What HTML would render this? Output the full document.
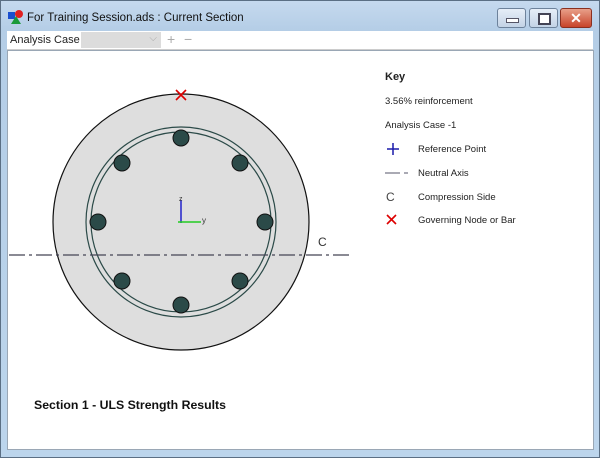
<!DOCTYPE html>
<html><head><meta charset="utf-8"><style>
body{margin:0;width:600px;height:458px;overflow:hidden;font-family:"Liberation Sans",Arial,sans-serif;}
.win{position:absolute;left:0;top:0;width:598px;height:456px;border:1px solid #5b6f84;background:linear-gradient(#c5d9ee,#b4cde6 30px,#bcd5ec);}
.title{position:absolute;left:26px;top:11px;font-size:11.5px;color:#111;}
.btn{position:absolute;top:7px;height:18px;border:1px solid #6d829b;border-radius:3px;background:linear-gradient(#e6eef8,#c3d3e6);}
.tb{position:absolute;left:6px;top:30px;width:586px;height:18px;background:#fff;border-bottom:1px solid #ccc;font-size:11px;}
.content{position:absolute;left:7px;top:50px;width:585px;height:398px;background:#fff;border:1px solid #9aa7b5;}
.k{position:absolute;font-size:9.5px;color:#222;}
</style></head><body>
<div class="win">
<svg style="position:absolute;left:7px;top:8px" width="16" height="16"><rect x="0" y="3" width="7" height="7" fill="#1a4fd0"/><circle cx="11" cy="5" r="4" fill="#e02020"/><polygon points="3,15 8,7 13,15" fill="#1a9a3a"/></svg>
<div class="title">For Training Session.ads : Current Section</div>
<div class="btn" style="left:496px;width:27px"><div style="position:absolute;left:8px;top:9px;width:11px;height:3px;background:#fff;border:1px solid #556"></div></div>
<div class="btn" style="left:528px;width:27px"><div style="position:absolute;left:8px;top:4px;width:9px;height:8px;border:2px solid #445;background:#fff"></div></div>
<div class="btn" style="left:559px;width:30px;background:linear-gradient(#e8a08a,#c8442a);border-color:#8a3020;color:#fff;font-weight:bold;font-size:14px;text-align:center;line-height:18px">✕</div>
<div class="tb"><span style="position:absolute;left:3px;top:3px;color:#222">Analysis Case</span>
<div style="position:absolute;left:74px;top:1px;width:80px;height:16px;background:#dcdcdc"><span style="position:absolute;right:4px;top:1px;color:#aaa;font-size:10px">⌵</span></div>
<span style="position:absolute;left:160px;top:0px;color:#aaa;font-size:14px">+</span><span style="position:absolute;left:177px;top:0px;color:#aaa;font-size:14px">−</span></div>
</div>
<div class="content">
<svg width="585" height="398" style="position:absolute;left:0;top:0">
<g transform="translate(-7,-50)">
<circle cx="180" cy="221" r="128" fill="#dedede" stroke="#111" stroke-width="1.2"/>
<circle cx="180" cy="221" r="95" fill="none" stroke="#2b4a48" stroke-width="1.2"/>
<circle cx="180" cy="221" r="90" fill="none" stroke="#2b4a48" stroke-width="1.2"/>
<g fill="#2b4a48" stroke="#111" stroke-width="1">
<circle cx="180" cy="137" r="8"/><circle cx="239" cy="162" r="8"/><circle cx="264" cy="221" r="8"/><circle cx="239" cy="280" r="8"/><circle cx="180" cy="304" r="8"/><circle cx="121" cy="280" r="8"/><circle cx="97" cy="221" r="8"/><circle cx="121" cy="162" r="8"/>
</g>
<line x1="8" y1="254" x2="350" y2="254" stroke="#445" stroke-width="1.3" stroke-dasharray="16,4,3,4"/>
<line x1="180" y1="199" x2="180" y2="222" stroke="#2222cc" stroke-width="1.5"/>
<line x1="177" y1="221" x2="200" y2="221" stroke="#22cc22" stroke-width="1.5"/>
<text x="178" y="200" font-size="7" fill="#333">z</text><text x="201" y="222" font-size="8" fill="#333">y</text>
<text x="317" y="245" font-size="12" fill="#333">C</text>
<path d="M175 89 L185 99 M185 89 L175 99" stroke="#d00" stroke-width="1.6"/>
<path d="M392 142 V154 M386 148 H398" stroke="#1a1aaa" stroke-width="1.5"/>
<path d="M384 172 H399 M403 172 H407" stroke="#778" stroke-width="1.2"/>
<text x="385" y="200" font-size="12" fill="#444">C</text>
<path d="M386 214 L395 223 M395 214 L386 223" stroke="#d00" stroke-width="1.6"/>
</g>
</svg>
<div class="k" style="left:377px;top:20px;font-weight:bold;font-size:11px">Key</div>
<div class="k" style="left:377px;top:45px">3.56% reinforcement</div>
<div class="k" style="left:377px;top:69px">Analysis Case -1</div>
<div class="k" style="left:410px;top:93px">Reference Point</div>
<div class="k" style="left:410px;top:117px">Neutral Axis</div>
<div class="k" style="left:410px;top:141px">Compression Side</div>
<div class="k" style="left:410px;top:164px">Governing Node or Bar</div>
<div style="position:absolute;left:26px;top:347px;font-size:12.3px;font-weight:bold;color:#111">Section 1 - ULS Strength Results</div>
</div>
</body></html>
